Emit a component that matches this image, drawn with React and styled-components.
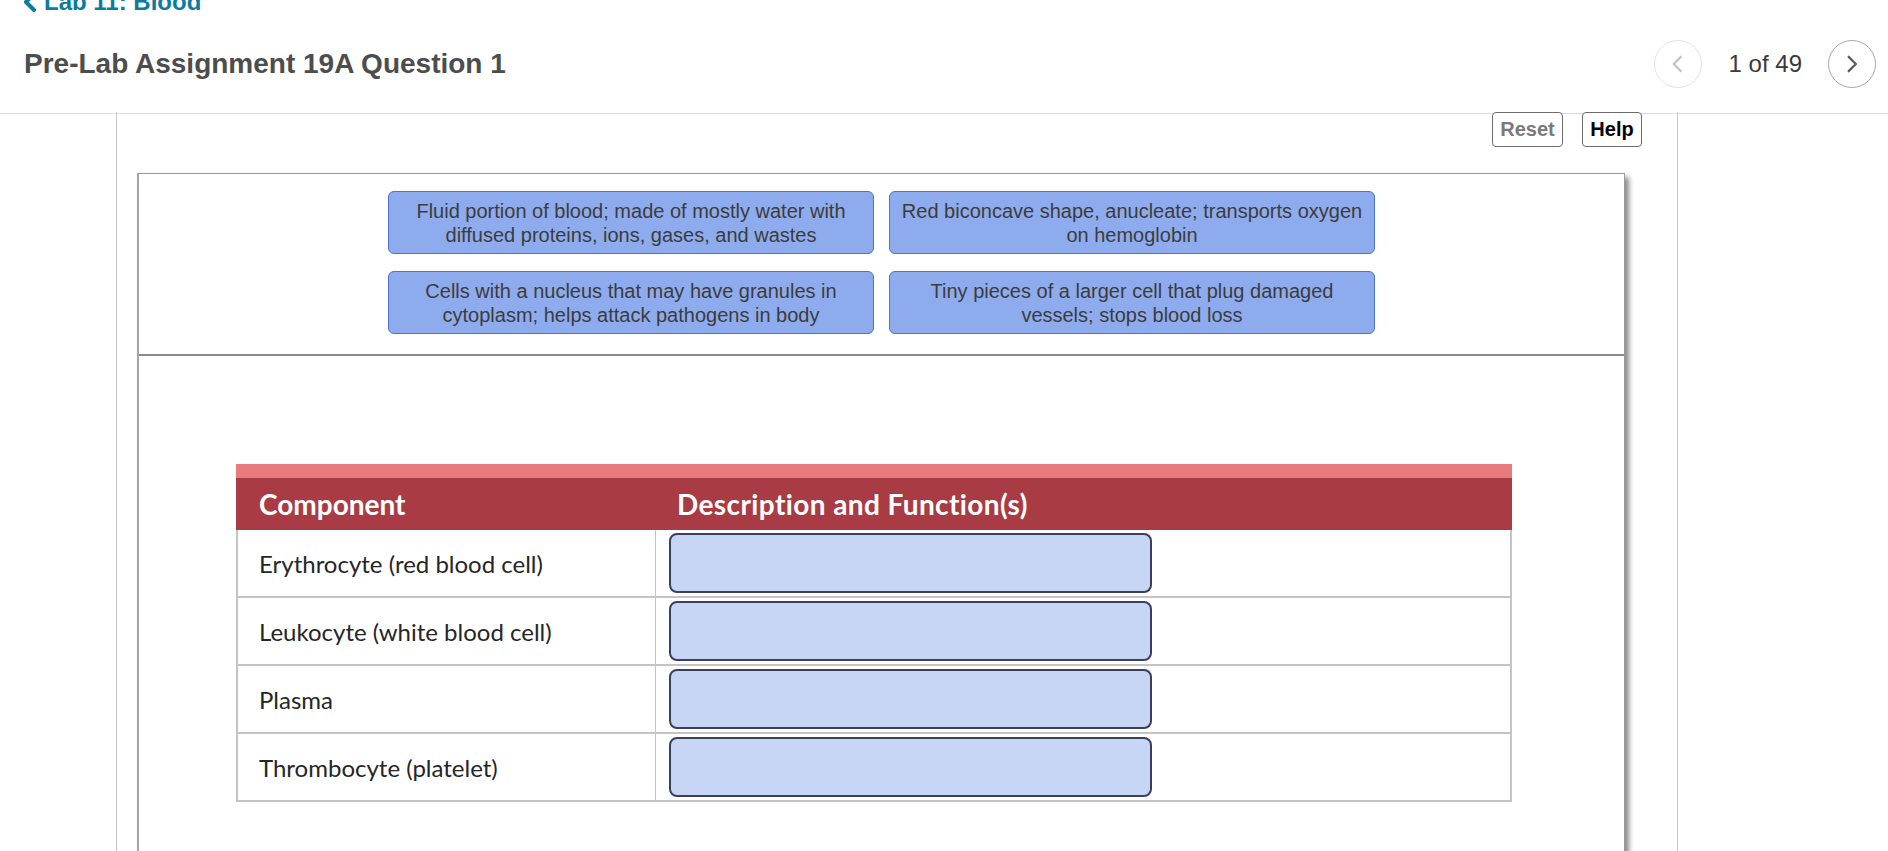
import React from 'react';
import styled, { createGlobalStyle } from 'styled-components';

const GlobalStyle = createGlobalStyle`
  * { box-sizing: border-box; }
  html, body { margin: 0; padding: 0; background: #fff; overflow: hidden; }
  body { font-family: "Liberation Sans", Arial, sans-serif; }
`;

const Header = styled.header`
  height: 114px;
  border-bottom: 1px solid #dcdcdc;
  padding: 0 12px 0 23px;
  display: flex;
  flex-direction: column;
`;

const BackLink = styled.a`
  display: flex;
  align-items: center;
  gap: 7px;
  margin-top: -12px;
  height: 27px;
  color: #0b7b9e;
  font-size: 24px;
  font-weight: bold;
  line-height: 27px;
  text-decoration: none;
`;

const TitleRow = styled.div`
  margin-top: 25px;
  height: 48px;
  display: flex;
  align-items: center;
  justify-content: space-between;
`;

const Title = styled.h1`
  margin: 0 0 0 1px;
  font-size: 28px;
  line-height: 32px;
  font-weight: bold;
  color: #4d4d4d;
`;

const Pager = styled.div`
  display: flex;
  align-items: center;
`;

const CircleButton = styled.button`
  width: 48px;
  height: 48px;
  border-radius: 50%;
  background: #fff;
  border: 1px solid ${p => (p.disabled ? '#e3e3e3' : '#a9a9a9')};
  color: ${p => (p.disabled ? '#c4c4c4' : '#5e5e5e')};
  display: flex;
  align-items: center;
  justify-content: center;
  padding: 0;
`;

const PageCount = styled.span`
  margin: 0 26px 0 27px;
  font-size: 24px;
  color: #3a3a3a;
`;

const Panel = styled.main`
  margin-left: 116px;
  width: 1562px;
  min-height: 760px;
  border-left: 1px solid #c9c9c9;
  border-right: 1px solid #c9c9c9;
  padding-left: 20px;
`;

const Toolbar = styled.div`
  margin-top: -2px;
  height: 35px;
  padding-right: 35px;
  display: flex;
  justify-content: flex-end;
  gap: 19px;
`;

const ToolButton = styled.button`
  height: 35px;
  padding: 0 7px;
  min-width: ${p => p.$w}px;
  background: #fff;
  border: 1px solid #6c6c6c;
  border-radius: 4px;
  font-family: "Liberation Sans", Arial, sans-serif;
  font-size: 20px;
  font-weight: bold;
  color: ${p => (p.$muted ? '#7a7a7a' : '#000')};
`;

const Board = styled.section`
  margin: 26px 52px 0 0;
  border: 1px solid #9a9a9a;
  border-left: 2px solid #a5a5a5;
  box-shadow: 4px 4px 5px rgba(0, 0, 0, 0.45);
  background: #fff;
`;

const CardArea = styled.div`
  display: grid;
  grid-template-columns: repeat(2, 486px);
  gap: 17px 15px;
  justify-content: center;
  padding: 17px 0 20px;
  border-bottom: 2px solid #8a8a8a;
`;

const Card = styled.div`
  height: 63px;
  padding: 0 6px;
  display: flex;
  align-items: center;
  justify-content: center;
  text-align: center;
  background: #8eabee;
  border: 1px solid #4e72c9;
  border-radius: 6px;
  font-size: 20px;
  line-height: 24px;
  color: #3c3c3c;
`;

const TableArea = styled.div`
  padding: 108px 112px 110px 97px;
`;

const Table = styled.div`
  width: 1276px;
  font-family: Lato, "Open Sans", sans-serif;
`;

const Stripe = styled.div`
  height: 14px;
  background: #e87c7d;
`;

const HeadRow = styled.div`
  height: 52px;
  display: grid;
  grid-template-columns: 418px 1fr;
  align-items: center;
  background: #a93b44;
  color: #fff;
  font-size: 28px;
  font-weight: bold;
`;

const HeadCell = styled.div`
  padding-left: 23px;
  letter-spacing: ${p => (p.$wide ? '0.4px' : '0')};
`;

const Row = styled.div`
  height: 68px;
  display: grid;
  grid-template-columns: 418px 1fr;
  border: 2px solid #c4c4c4;
  border-top: none;
`;

const NameCell = styled.div`
  display: flex;
  align-items: center;
  padding-left: 21px;
  border-right: 1px solid #c4c4c4;
  font-size: 24px;
  color: #262626;
`;

const DropCell = styled.div`
  display: flex;
  align-items: center;
  padding-left: 13px;
`;

const DropZone = styled.div`
  width: 483px;
  height: 60px;
  background: #c7d6f5;
  border: 2px solid #3b3f5e;
  border-radius: 8px;
`;

const Chevron = ({ dir, size = 18, stroke = 2.6 }) => (
  <svg width={size * 0.7} height={size} viewBox="0 0 14 20" fill="none">
    <polyline
      points={dir === 'left' ? '11,2 3,10 11,18' : '3,2 11,10 3,18'}
      stroke="currentColor"
      strokeWidth={stroke}
      strokeLinecap="round"
      strokeLinejoin="round"
    />
  </svg>
);

const cards = [
  'Fluid portion of blood; made of mostly water with diffused proteins, ions, gases, and wastes',
  'Red biconcave shape, anucleate; transports oxygen on hemoglobin',
  'Cells with a nucleus that may have granules in cytoplasm; helps attack pathogens in body',
  'Tiny pieces of a larger cell that plug damaged vessels; stops blood loss',
];

const components = [
  'Erythrocyte (red blood cell)',
  'Leukocyte (white blood cell)',
  'Plasma',
  'Thrombocyte (platelet)',
];

export default function App() {
  return (
    <>
      <GlobalStyle />
      <Header>
        <BackLink href="#">
          <Chevron dir="left" size={20} stroke={4} />
          <span>Lab 11: Blood</span>
        </BackLink>
        <TitleRow>
          <Title>Pre-Lab Assignment 19A Question 1</Title>
          <Pager>
            <CircleButton disabled>
              <Chevron dir="left" />
            </CircleButton>
            <PageCount>1 of 49</PageCount>
            <CircleButton>
              <Chevron dir="right" />
            </CircleButton>
          </Pager>
        </TitleRow>
      </Header>

      <Panel>
        <Toolbar>
          <ToolButton $muted $w={71}>Reset</ToolButton>
          <ToolButton $w={60}>Help</ToolButton>
        </Toolbar>

        <Board>
          <CardArea>
            {cards.map(c => (
              <Card key={c}>{c}</Card>
            ))}
          </CardArea>

          <TableArea>
            <Table>
              <Stripe />
              <HeadRow>
                <HeadCell>Component</HeadCell>
                <HeadCell $wide>Description and Function(s)</HeadCell>
              </HeadRow>
              {components.map(name => (
                <Row key={name}>
                  <NameCell>{name}</NameCell>
                  <DropCell>
                    <DropZone />
                  </DropCell>
                </Row>
              ))}
            </Table>
          </TableArea>
        </Board>
      </Panel>
    </>
  );
}
